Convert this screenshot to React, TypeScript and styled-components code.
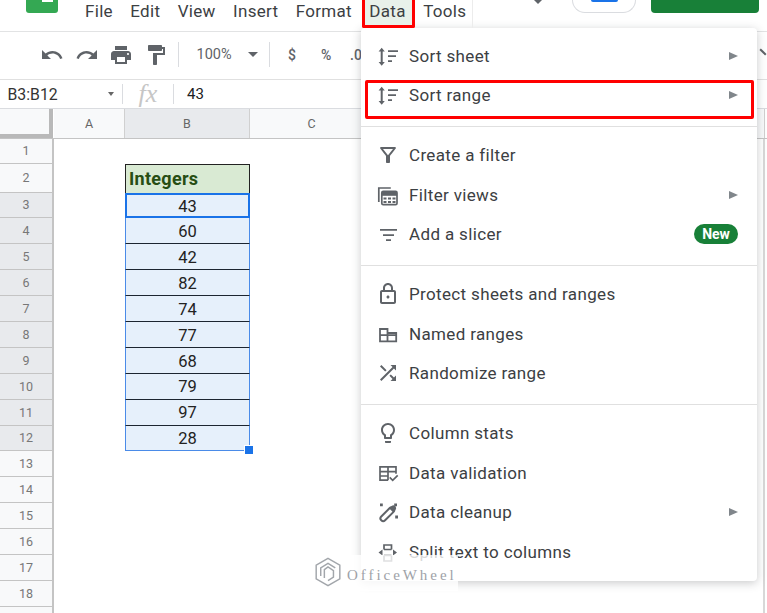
import React from "react";
import styled, { createGlobalStyle } from "styled-components";

const Global = createGlobalStyle`
  html, body { margin: 0; padding: 0; background: #fff; overflow: hidden; }
  * { box-sizing: border-box; }
  body { font-family: Roboto, "Liberation Sans", sans-serif; }
`;

const Page = styled.div`
  position: relative;
  width: 767px;
  height: 613px;
  overflow: hidden;
  background: #fff;
`;

const MenuBar = styled.header`
  display: flex;
  align-items: flex-start;
  height: 32px;
  padding-left: 26px;
  border-bottom: 1px solid #e2e3e4;
`;

const Logo = styled.div`
  position: relative;
  width: 32px;
  height: 13px;
  background: #34a853;
  border-radius: 0 0 3px 3px;
  margin-right: 27px;
  &::after {
    content: "";
    position: absolute;
    left: 16px;
    top: 0;
    width: 11px;
    height: 2px;
    background: #fff;
  }
`;

const MenuList = styled.nav`
  display: flex;
  gap: 17.4px;
`;

const MenuLabel = styled.span<{ $active?: boolean; $edge?: boolean }>`
  position: relative;
  z-index: 1;
  font-size: 17px;
  line-height: 23px;
  letter-spacing: 0.3px;
  color: #3c4043;
  ${(p) =>
    p.$active &&
    `
    &::before {
      content: "";
      position: absolute;
      z-index: -1;
      left: -7.5px;
      right: -9.5px;
      top: 0;
      height: 25px;
      background: #e8f1ea;
      border: 3px solid #f00;
      border-top: none;
      border-radius: 0 0 2px 2px;
    }
  `}
  ${(p) =>
    p.$edge &&
    `
    &::after {
      content: "";
      position: absolute;
      right: -7px;
      top: 0;
      width: 1px;
      height: 28px;
      background: #ececec;
    }
  `}
`;

const TopRight = styled.div`
  display: flex;
  align-items: flex-start;
  margin-left: auto;
  padding-right: 8px;
`;

const Caret = styled.div`
  width: 0;
  height: 0;
  border-left: 4px solid transparent;
  border-right: 4px solid transparent;
  border-top: 4px solid #5f6368;
  margin-right: 30px;
`;

const Pill = styled.div`
  display: flex;
  justify-content: center;
  width: 64px;
  height: 13px;
  border: 1px solid #dadce0;
  border-top: none;
  border-radius: 0 0 22px 22px;
  margin-right: 15px;
`;

const PillDot = styled.div`
  width: 27px;
  height: 2px;
  background: #1a73e8;
  border-radius: 0 0 2px 2px;
`;

const ShareButton = styled.div`
  width: 108px;
  height: 13px;
  background: #188038;
  border-radius: 0 0 4px 4px;
`;

const Toolbar = styled.div`
  display: flex;
  align-items: center;
  height: 48px;
  padding: 0 0 2px 40px;
  border-bottom: 1px solid #e0e0e0;
  color: #5f6368;
`;

const ToolIcons = styled.div`
  display: flex;
  gap: 10.5px;
`;

const ToolSvg = styled.svg`
  width: 24px;
  height: 24px;
  fill: #5f6368;
  display: block;
`;

const ToolSep = styled.div<{ $ml: number }>`
  width: 1px;
  height: 25px;
  background: #dadce0;
  margin: 0 18px 0 ${(p) => p.$ml}px;
`;

const ZoomText = styled.span`
  font-size: 14.5px;
  width: 51px;
`;

const DownCaret = styled.span`
  width: 0;
  height: 0;
  border-left: 5px solid transparent;
  border-right: 5px solid transparent;
  border-top: 5px solid #5f6368;
`;

const Symbol = styled.span<{ $w: number }>`
  width: ${(p) => p.$w}px;
  font-size: 14px;
  font-weight: 500;
`;

const FormulaBar = styled.div`
  display: flex;
  align-items: center;
  height: 29px;
  border-bottom: 1px solid #dadce0;
  color: #202124;
`;

const NameBox = styled.span`
  width: 100px;
  padding-left: 7.5px;
  font-size: 15.8px;
  color: #333;
`;

const NameCaret = styled.span`
  width: 0;
  height: 0;
  border-left: 3.5px solid transparent;
  border-right: 3.5px solid transparent;
  border-top: 4px solid #666;
  margin: 0 8px;
`;

const FormulaSep = styled.span`
  width: 1px;
  height: 20px;
  background: #dadce0;
`;

const Fx = styled.span`
  font-family: "Liberation Serif", serif;
  font-style: italic;
  font-size: 26px;
  line-height: 28px;
  color: #c6c6c6;
  width: 50px;
  padding-left: 15.5px;
`;

const FormulaValue = styled.span`
  padding-left: 13px;
  font-size: 15px;
`;

const ColHeaders = styled.div`
  display: grid;
  grid-template-columns: 54px 71px 125px 124px 391px;
  height: 29.5px;
  border-bottom: 1px solid #c4c4c4;
`;

const Corner = styled.div`
  border-right: 4px solid #b9b9b9;
  border-bottom: 4px solid #b9b9b9;
  margin-right: 1px;
  background: #f8f9fa;
`;

const ColHead = styled.div<{ $on?: boolean }>`
  display: flex;
  align-items: center;
  justify-content: center;
  font-size: 12.5px;
  color: #666;
  background: ${(p) => (p.$on ? "#e8eaed" : "#f8f9fa")};
  border-right: 1px solid #d0d0d0;
`;

const Sheet = styled.div`
  display: grid;
  grid-template-columns: 54px 71px 125px 124px 391px;
  grid-template-rows: 25.5px 28.5px;
  grid-auto-rows: 25.9px;
`;

const RowHead = styled.div<{ $on?: boolean }>`
  display: flex;
  align-items: center;
  justify-content: center;
  font-size: 12.5px;
  color: #777;
  background: ${(p) => (p.$on ? "#e8eaed" : "#f8f9fa")};
  border-right: 2px solid #c4c4c4;
  border-bottom: 1px solid #c4c4c4;
`;

const Blank = styled.div<{ $end?: boolean }>`
  ${(p) => p.$end && "border-right: 2px solid #d8d8d8;"}
`;

const HeadCell = styled.div`
  display: flex;
  align-items: center;
  padding-left: 3px;
  background: #d9ead3;
  border: 1px solid #222;
  border-bottom: none;
  font-weight: 700;
  font-size: 18px;
  letter-spacing: 0.3px;
  color: #274e13;
`;

const DataCell = styled.div<{ $first?: boolean; $last?: boolean }>`
  position: relative;
  display: flex;
  align-items: center;
  justify-content: center;
  padding-top: 1.5px;
  font-size: 16.5px;
  color: #222;
  background: #e6f0fb;
  border-left: 1.5px solid #4a8be8;
  border-right: 1.5px solid #4a8be8;
  border-bottom: 1px solid #1c2530;
  ${(p) => p.$first && "border: 2px solid #1a73e8;"}
  ${(p) => p.$last && "border-bottom: 1.5px solid #4a8be8;"}
`;

const FillHandle = styled.span`
  position: absolute;
  right: -5px;
  bottom: -5px;
  width: 8px;
  height: 8px;
  background: #1a73e8;
  border: 1px solid #fff;
  box-sizing: content-box;
`;

const Menu = styled.div`
  position: absolute;
  left: 361px;
  top: 28px;
  width: 396px;
  height: 553px;
  padding-top: 7.75px;
  background: #fff;
  border-radius: 4px;
  box-shadow: 0 2px 10px rgba(60, 64, 67, 0.28);
`;

const Item = styled.div<{ $boxed?: boolean }>`
  position: relative;
  display: flex;
  align-items: center;
  height: 39.5px;
  padding: 0 19px 0 15px;
  ${(p) =>
    p.$boxed &&
    `
    &::after {
      content: "";
      position: absolute;
      left: 4px;
      right: 3px;
      top: 5px;
      bottom: -4.5px;
      border: 3px solid #f00;
      border-radius: 2px;
    }
  `}
`;

const ItemSvg = styled.svg`
  width: 24px;
  height: 24px;
  flex: none;
  fill: #5f6368;
`;

const ItemLabel = styled.span`
  flex: 1;
  margin-left: 9px;
  font-size: 17px;
  letter-spacing: 0.35px;
  color: #3c4043;
`;

const Arrow = styled.span`
  width: 0;
  height: 0;
  border-top: 4.5px solid transparent;
  border-bottom: 4.5px solid transparent;
  border-left: 9px solid #80868b;
`;

const NewBadge = styled.span`
  height: 20px;
  line-height: 20px;
  width: 44px;
  text-align: center;
  font-size: 14px;
  font-weight: 700;
  color: #fff;
  background: #188038;
  border-radius: 10px;
`;

const Divider = styled.div`
  height: 1px;
  margin: 11px 0 8.5px;
  background: #e0e0e0;
`;

const Watermark = styled.div`
  position: absolute;
  left: 308px;
  top: 555px;
  width: 150px;
  height: 36px;
  display: flex;
  align-items: flex-start;
  gap: 4px;
  padding: 2px 0 0 5px;
  background: rgba(255, 255, 255, 0.8);
`;

const WatermarkText = styled.span`
  margin-top: 10px;
  font-family: "Liberation Serif", serif;
  font-size: 15px;
  line-height: 16px;
  letter-spacing: 2.95px;
  color: #9ea2a8;
  white-space: nowrap;
`;

const PencilMark = styled.div`
  position: absolute;
  left: 759px;
  top: 51px;
  width: 8px;
  height: 2px;
  background: #5f6368;
  transform: rotate(45deg);
`;

const S = { fill: "none", stroke: "#5f6368", strokeWidth: 1.7 } as const;

const icons: Record<string, React.ReactNode> = {
  sort: (
    <>
      <path d="M5.7 7v11" {...S} strokeWidth={2} />
      <path d="M5.7 3.8 2.6 7.6h6.2zM5.7 21.8 2.6 18h6.2z" />
      <path d="M12 6.2h10v1.7H12zM12 11.2h8v1.7h-8zM12 16.2h4v1.7h-4z" />
    </>
  ),
  filter: (
    <path d="M7 6h10l-5.01 6.3L7 6zm-2.75-.39C6.27 8.2 10 13 10 13v6c0 .55.45 1 1 1h2c.55 0 1-.45 1-1v-6s3.72-4.8 5.75-7.39C20.26 4.95 19.79 4 18.95 4H5.04c-.83 0-1.3.95-.79 1.61z" />
  ),
  views: (
    <>
      <path d="M2.8 19V5h12" {...S} />
      <rect x="5.8" y="8.3" width="15.2" height="13.4" rx="1.4" {...S} />
      <path d="M6 8.5h15v4.3H6z" />
      <path d="M7.5 14.5h3v2h-3zM12 14.5h3v2h-3zM16.5 14.5h3v2h-3zM7.5 18h3v2h-3zM12 18h3v2h-3zM16.5 18h3v2h-3z" />
    </>
  ),
  slicer: <path d="M4 7h17v1.7H4zM7 12.2h11v1.7H7zM10 17.3h5V19h-5z" />,
  lock: (
    <path d="M18 8h-1V6c0-2.76-2.24-5-5-5S7 3.24 7 6v2H6c-1.1 0-2 .9-2 2v10c0 1.1.9 2 2 2h12c1.1 0 2-.9 2-2V10c0-1.1-.9-2-2-2zM9 6c0-1.66 1.34-3 3-3s3 1.34 3 3v2H9V6zm9 14H6V10h12v10zm-6-3.5c.83 0 1.5-.67 1.5-1.5s-.67-1.5-1.5-1.5-1.5.67-1.5 1.5.67 1.5 1.5 1.5z" />
  ),
  named: (
    <path
      d="M4 7h7.5v12.3H4zM11.5 11h8.7v8.3h-8.7zM4 13.2h16"
      {...S}
      strokeWidth={1.8}
    />
  ),
  shuffle: (
    <path d="M10.59 9.17L5.41 4 4 5.41l5.17 5.17 1.42-1.41zM14.5 4l2.04 2.04L4 18.59 5.41 20 17.96 7.46 20 9.5V4h-5.5zm.33 9.41l-1.41 1.41 3.13 3.13L14.5 20H20v-5.5l-2.04 2.04-3.13-3.13z" />
  ),
  bulb: (
    <path d="M9 21c0 .55.45 1 1 1h4c.55 0 1-.45 1-1v-1H9v1zm3-19C8.14 2 5 5.14 5 9c0 2.38 1.19 4.47 3 5.74V17c0 .55.45 1 1 1h6c.55 0 1-.45 1-1v-2.26c1.81-1.27 3-3.36 3-5.74 0-3.86-3.14-7-7-7zm2.85 11.1l-.85.6V16h-4v-2.3l-.85-.6C7.8 12.16 7 10.63 7 9c0-2.76 2.24-5 5-5s5 2.24 5 5c0 1.63-.8 3.16-2.15 4.1z" />
  ),
  validate: (
    <>
      <path d="M12 19.2H4V5.8h16v7M4 10.6h16M12 5.8v13.4M4 15h8" {...S} />
      <path d="M13.7 16.4l3 3 5-5" {...S} />
    </>
  ),
  cleanup: (
    <>
      <rect x="2.8" y="11.6" width="17" height="5.4" rx="2.7" transform="rotate(-45 11.3 14.3)" {...S} strokeWidth={2} />
      <path d="M13.3 8.4l2.3-2.3a2.7 2.7 0 0 1 3.8 3.8l-2.3 2.3z" />
      <path d="M4 3.5h2.8v2.8H4zM18.2 3.5H21v2.8h-2.8zM19.2 15.6H22v2.8h-2.8z" />
    </>
  ),
  split: (
    <>
      <path d="M8 9.5V5h7.5v4.5M8 15.5V21h7.5v-5.5M8 9.5h7.5M8 15.5h7.5" {...S} />
      <path d="M6.5 9.5v6L2.5 12.5zM17 9.5v6l4-3z" />
    </>
  ),
};

type Entry = { icon: string; label: string; sub?: boolean; badge?: boolean; boxed?: boolean };

const groups: Entry[][] = [
  [
    { icon: "sort", label: "Sort sheet", sub: true },
    { icon: "sort", label: "Sort range", sub: true, boxed: true },
  ],
  [
    { icon: "filter", label: "Create a filter" },
    { icon: "views", label: "Filter views", sub: true },
    { icon: "slicer", label: "Add a slicer", badge: true },
  ],
  [
    { icon: "lock", label: "Protect sheets and ranges" },
    { icon: "named", label: "Named ranges" },
    { icon: "shuffle", label: "Randomize range" },
  ],
  [
    { icon: "bulb", label: "Column stats" },
    { icon: "validate", label: "Data validation" },
    { icon: "cleanup", label: "Data cleanup", sub: true },
    { icon: "split", label: "Split text to columns" },
  ],
];

const values = [43, 60, 42, 82, 74, 77, 68, 79, 97, 28];
const rows = Array.from({ length: 19 }, (_, i) => i + 1);

export default function App() {
  return (
    <Page>
      <Global />
      <MenuBar>
        <Logo />
        <MenuList>
          {["File", "Edit", "View", "Insert", "Format"].map((m) => (
            <MenuLabel key={m}>{m}</MenuLabel>
          ))}
          <MenuLabel $active>Data</MenuLabel>
          <MenuLabel $edge>Tools</MenuLabel>
        </MenuList>
        <TopRight>
          <Caret />
          <Pill>
            <PillDot />
          </Pill>
          <ShareButton />
        </TopRight>
      </MenuBar>

      <Toolbar>
        <ToolIcons>
          <ToolSvg viewBox="0 0 24 24">
            <path d="M12.5 8c-2.65 0-5.05.99-6.9 2.6L2 7v9h9l-3.62-3.62c1.39-1.16 3.16-1.88 5.12-1.88 3.54 0 6.55 2.31 7.6 5.5l2.37-.78C21.08 11.03 17.15 8 12.5 8z" />
          </ToolSvg>
          <ToolSvg viewBox="0 0 24 24">
            <path d="M18.4 10.6C16.55 8.99 14.15 8 11.5 8c-4.65 0-8.58 3.03-9.96 7.22L3.9 16c1.05-3.19 4.05-5.5 7.6-5.5 1.95 0 3.73.72 5.12 1.88L13 16h9V7l-3.6 3.6z" />
          </ToolSvg>
          <ToolSvg viewBox="0 0 24 24">
            <path d="M19 8H5c-1.66 0-3 1.34-3 3v6h4v4h12v-4h4v-6c0-1.66-1.34-3-3-3zm-3 11H8v-5h8v5zm3-7c-.55 0-1-.45-1-1s.45-1 1-1 1 .45 1 1-.45 1-1 1zm-1-9H6v4h12V3z" />
          </ToolSvg>
          <ToolSvg viewBox="0 0 24 24">
            <path d="M18 4V3c0-.55-.45-1-1-1H5c-.55 0-1 .45-1 1v4c0 .55.45 1 1 1h12c.55 0 1-.45 1-1V6h1v4H9v11c0 .55.45 1 1 1h2c.55 0 1-.45 1-1v-9h8V4h-3z" />
          </ToolSvg>
        </ToolIcons>
        <ToolSep $ml={10} />
        <ZoomText>100%</ZoomText>
        <DownCaret />
        <ToolSep $ml={11.5} />
        <Symbol $w={33}>$</Symbol>
        <Symbol $w={29}>%</Symbol>
        <Symbol $w={20}>.0</Symbol>
      </Toolbar>

      <FormulaBar>
        <NameBox>B3:B12</NameBox>
        <NameCaret />
        <FormulaSep />
        <Fx>fx</Fx>
        <FormulaSep />
        <FormulaValue>43</FormulaValue>
      </FormulaBar>

      <ColHeaders>
        <Corner />
        <ColHead>A</ColHead>
        <ColHead $on>B</ColHead>
        <ColHead>C</ColHead>
        <ColHead />
      </ColHeaders>

      <Sheet>
        {rows.map((r) => {
          const v = r >= 3 && r <= 12 ? values[r - 3] : null;
          return (
            <React.Fragment key={r}>
              <RowHead $on={v !== null}>{r < 19 ? r : ""}</RowHead>
              <Blank />
              {r === 2 ? (
                <HeadCell>Integers</HeadCell>
              ) : v !== null ? (
                <DataCell $first={r === 3} $last={r === 12}>
                  {v}
                  {r === 12 && <FillHandle />}
                </DataCell>
              ) : (
                <Blank />
              )}
              <Blank />
              <Blank $end />
            </React.Fragment>
          );
        })}
      </Sheet>

      <PencilMark />

      <Menu>
        {groups.map((g, i) => (
          <React.Fragment key={i}>
            {i > 0 && <Divider />}
            {g.map((e) => (
              <Item key={e.label} $boxed={e.boxed}>
                <ItemSvg viewBox="0 0 24 24">{icons[e.icon]}</ItemSvg>
                <ItemLabel>{e.label}</ItemLabel>
                {e.sub && <Arrow />}
                {e.badge && <NewBadge>New</NewBadge>}
              </Item>
            ))}
          </React.Fragment>
        ))}
      </Menu>

      <Watermark>
        <svg width="30" height="30" viewBox="0 0 30 33" fill="none" stroke="#a2a6ab" strokeWidth="1.6">
          <path d="M15 1.5 28 9v15l-13 7.5L2 24V9z" />
          <path d="M7 21V12l8-5 8 5M11 23V14l4-3 6 4v7l-6 4" />
        </svg>
        <WatermarkText>OfficeWheel</WatermarkText>
      </Watermark>
    </Page>
  );
}
